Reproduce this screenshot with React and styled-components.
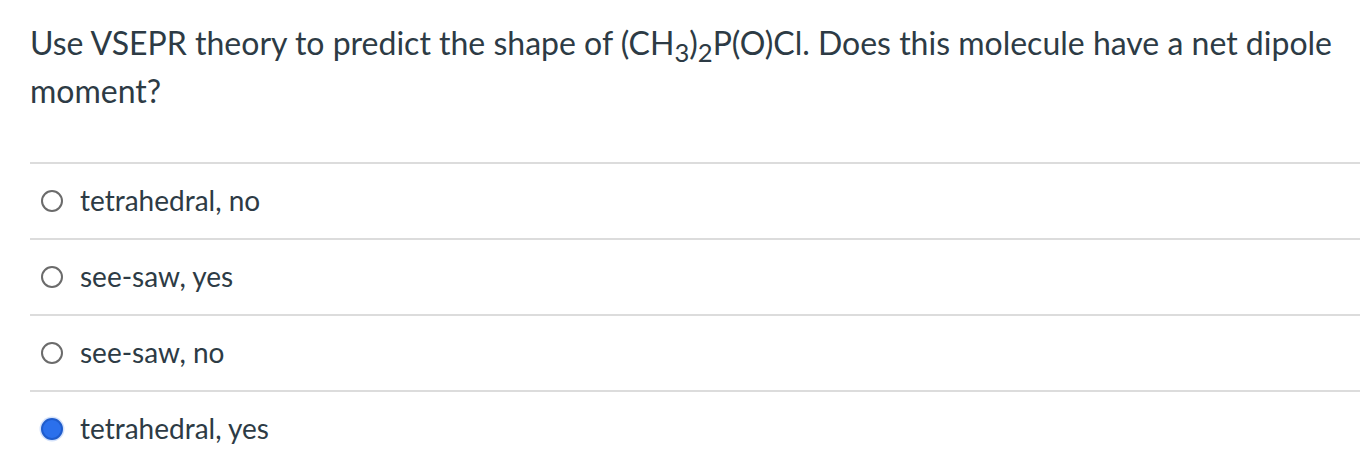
import React from "react";
import styled, { createGlobalStyle } from "styled-components";

const Global = createGlobalStyle`
  html, body { margin: 0; padding: 0; background: #ffffff; }
  body { font-family: Lato, "Open Sans", sans-serif; color: #2d3b45; }
`;

const Page = styled.div`
  padding: 19px 0 0 30px;
`;

const Question = styled.div`
  font-size: 32px;
  line-height: 48px;
  padding-right: 10px;
  margin: 0 0 47px 0;
  sub {
    font-size: 0.8em;
    line-height: 0;
    vertical-align: -0.28em;
  }
`;

const Answers = styled.div`
  display: flex;
  flex-direction: column;
`;

const Answer = styled.label`
  display: flex;
  align-items: center;
  height: 74px;
  border-top: 2px solid #dcdcdc;
  padding-left: 11px;
  gap: 17px;
  font-size: 28px;
  cursor: pointer;
`;

const Radio = styled.span`
  box-sizing: border-box;
  width: 22px;
  height: 22px;
  border-radius: 50%;
  flex: none;
  border: ${(p) => (p.$checked ? "2px solid #1f5ccc" : "2px solid #6b6b6b")};
  background: ${(p) => (p.$checked ? "#2b70ec" : "#ffffff")};
  box-shadow: ${(p) => (p.$checked ? "0 0 0 1.5px #d4e2fb" : "none")};
`;

const AnswerText = styled.span`
  line-height: 1;
  margin-top: -2px;
`;

const answers = [
  { text: "tetrahedral, no" },
  { text: "see-saw, yes" },
  { text: "see-saw, no" },
  { text: "tetrahedral, yes", checked: true },
];

export default function App() {
  return (
    <>
      <Global />
      <Page>
        <Question>
          Use VSEPR theory to predict the shape of (CH<sub>3</sub>)<sub>2</sub>P(O)Cl. Does this
          molecule have a net dipole moment?
        </Question>
        <Answers>
          {answers.map((a) => (
            <Answer key={a.text}>
              <Radio $checked={!!a.checked} />
              <AnswerText>{a.text}</AnswerText>
            </Answer>
          ))}
        </Answers>
      </Page>
    </>
  );
}
